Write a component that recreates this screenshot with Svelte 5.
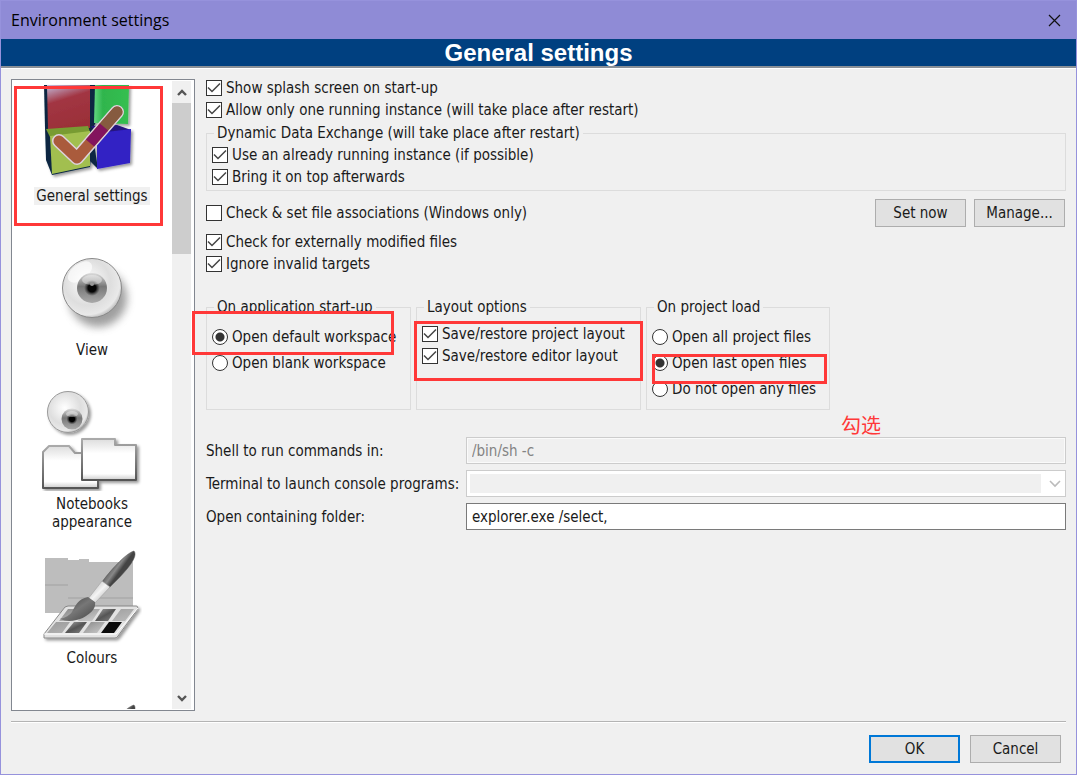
<script>
  let startup = $state('default');
  let load = $state('last');
  let selected = $state('General settings');
  const pages = ['General settings', 'View', 'Notebooks appearance', 'Colours', 'Editor'];
</script>

{#snippet check(label, checked)}
  <label class="option"><input type="checkbox" {checked} /><span>{label}</span></label>
{/snippet}

{#snippet brush()}
  <path d="M92 6C84 8 67 27 60 37l7 6C77 33 98 13 92 6Z" fill="url(#handle)" stroke="#555" stroke-width=".5" />
  <path d="M60 36 46 54l7 4 15-16Z" fill="url(#ferrule)" stroke="#999" stroke-width=".5" />
  <path d="M46 52c-10 2-13 9-16 15-4 5-9 6-12 7 9 4 20 1 26-3 6-4 10-8 9-14Z" fill="url(#bristle)" />
{/snippet}

<div class="window">
  <header class="titlebar">
    <span>Environment settings</span>
    <button class="close" aria-label="Close">
      <svg width="13" height="13" viewBox="0 0 13 13"><path d="M1 1l11 11M12 1 1 12" stroke="#111" stroke-width="1.2" /></svg>
    </button>
  </header>
  <h1>General settings</h1>

  <main>
    <nav class="sidebar">
      <div class="pages">
        {#each pages as page, i}
          <button class="page" class:selected={selected === page} aria-label={page} onclick={() => (selected = page)}>
            <svg width="100" height="100" viewBox="0 0 100 100" fill="none">
              {#if i === 0}
                <defs>
                  <linearGradient id="red" x1="0" y1="0" x2=".3" y2="1"><stop stop-color="#c3bfe0" /><stop offset=".4" stop-color="#a23643" /><stop offset="1" stop-color="#9b2f38" /></linearGradient>
                  <linearGradient id="green" x1="0" x2="1"><stop stop-color="#62d680" /><stop offset=".25" stop-color="#2fb54d" /><stop offset="1" stop-color="#35bf50" /></linearGradient>
                  <filter id="soft" x="-20%" y="-20%" width="150%" height="150%"><feDropShadow dx="2" dy="2" stdDeviation="1.5" flood-opacity=".4" /></filter>
                </defs>
                <g filter="url(#soft)">
                  <path d="M2 2h50v40l-4 42-38 8-6-15-1-32Z" fill="#0a2742" />
                  <path d="M46 2h8v37l-4 8 6 39-8-8Z" fill="#0a2742" />
                  <path d="M5 2h43v43L6 47Z" fill="url(#red)" />
                  <path d="M53 2h34l-1 39-34-1Z" fill="url(#green)" />
                  <path d="m4 46 42-3 2 6-40 5Z" fill="#789b30" />
                  <path d="m8 53 40-5v35l-38 8Z" fill="#a2bf50" />
                  <path d="m49 43 26-1 14 5-34 4Z" fill="#26147d" />
                  <path d="m55 50 34-4-1 34-33 6Z" fill="#3020c4" />
                </g>
                <path d="m17 58 18 17 40-46" stroke="#ddd3dc" stroke-width="14" stroke-linecap="round" stroke-linejoin="round" />
                <path d="m17 58 18 17 40-46" stroke="#aa5b3c" stroke-width="11" stroke-linecap="round" stroke-linejoin="round" />
                <path d="m61 45 14-16" stroke="#865b40" stroke-width="11" stroke-linecap="round" />
                <path d="m48 60 14-16" stroke="#83145e" stroke-width="11" />
              {:else if i === 1}
                <defs>
                  <radialGradient id="ball" cx=".42" cy=".4" r=".65"><stop stop-color="#fff" /><stop offset=".6" stop-color="#dedede" /><stop offset=".85" stop-color="#e9e9e9" /><stop offset="1" stop-color="#aaa" /></radialGradient>
                  <linearGradient id="iris" x1="0" y1="0" x2="0" y2="1"><stop stop-color="#ddd" /><stop offset=".45" stop-color="#777" /><stop offset="1" stop-color="#aaa" /></linearGradient>
                  <radialGradient id="pupil"><stop offset=".5" stop-color="#050505" /><stop offset="1" stop-color="#333" stop-opacity="0" /></radialGradient>
                  <filter id="blur" x="-30%" y="-30%" width="160%" height="160%"><feGaussianBlur stdDeviation="4" /></filter>
                </defs>
                <circle cx="56" cy="61" r="29" fill="#777" opacity=".7" filter="url(#blur)" />
                <circle cx="50" cy="51" r="29.5" fill="url(#ball)" stroke="#8a8a8a" />
                <ellipse cx="38" cy="35" rx="14" ry="8" fill="#fff" opacity=".65" transform="rotate(-38 38 35)" />
                <circle cx="50" cy="51" r="15" fill="url(#iris)" />
                <circle cx="50" cy="51" r="8" fill="url(#pupil)" />
                <ellipse cx="50" cy="43" rx="10" ry="5" fill="#fff" opacity=".4" />
                <circle cx="50" cy="47" r="2" fill="#999" />
              {:else if i === 2}
                <defs>
                  <linearGradient id="paper" x1="0" y1="0" x2="0" y2="1"><stop stop-color="#ddd" /><stop offset=".35" stop-color="#fff" /><stop offset=".85" stop-color="#fff" /><stop offset="1" stop-color="#ccc" /></linearGradient>
                  <linearGradient id="edge" x1="0" y1="0" x2="0" y2="1"><stop stop-color="#aaa" /><stop offset="1" stop-color="#555" /></linearGradient>
                </defs>
                <g filter="url(#soft)">
                  <circle cx="26" cy="21" r="20.5" fill="url(#ball)" stroke="#999" />
                  <circle cx="30" cy="28" r="10.5" fill="url(#iris)" />
                  <circle cx="30" cy="28" r="5.5" fill="url(#pupil)" />
                  <ellipse cx="30" cy="23" rx="6" ry="3" fill="#fff" opacity=".4" />
                </g>
                <g filter="url(#soft)" stroke="url(#edge)" stroke-width="2" stroke-linejoin="round">
                  <path d="M1 61l6-6h20l6 7h23v35H1Z" fill="url(#paper)" />
                  <path d="M40 48h33v6h21v35H40Z" fill="url(#paper)" />
                </g>
              {:else if i === 3}
                <defs>
                  <linearGradient id="handle" x1="0" y1="0" x2="1" y2=".8"><stop offset=".3" stop-color="#4a4a4a" /><stop offset=".5" stop-color="#888" /><stop offset=".6" stop-color="#444" /></linearGradient>
                  <linearGradient id="ferrule" x1="0" y1="0" x2="1" y2="1"><stop stop-color="#aaa" /><stop offset=".5" stop-color="#f4f4f4" /><stop offset="1" stop-color="#999" /></linearGradient>
                  <linearGradient id="bristle" x1="0" y1="0" x2="1" y2="1"><stop stop-color="#333" /><stop offset=".5" stop-color="#777" /><stop offset="1" stop-color="#444" /></linearGradient>
                  <linearGradient id="cell" x1="0" y1="0" x2="1" y2="1"><stop stop-color="#888" /><stop offset="1" stop-color="#ccc" /></linearGradient>
                  <linearGradient id="dark" x1="0" y1="0" x2="1" y2="1"><stop stop-color="#aaa" /><stop offset=".5" stop-color="#555" /><stop offset="1" stop-color="#888" /></linearGradient>
                </defs>
                <path d="M3 13h23v2h11v-1h10v3h44v44H26v7H3Z" fill="#bdbdbd" />
                <path d="M3 40h23M26 53h65" stroke="#aaa" stroke-width="1.5" />
                <g filter="url(#soft)">
                  <path d="M26 61h68q3 0 1 4L76 91q-1 2-3 2H2v-4l21-27Z" fill="#e2e2e2" stroke="#888" />
                </g>
                <path d="M2 89h72l22-26" stroke="#fff" />
                <path d="M26 64h14L31 76H17ZM44 64h14l-8 12H36Z" fill="url(#cell)" />
                <path d="M61 64h13l-8 12H53Z" fill="url(#dark)" />
                <path d="M79 64h13l-9 12H70ZM14 77h14L20 88H5Z" fill="url(#cell)" />
                <path d="M32 77h13l-8 11H23Z" fill="url(#dark)" />
                <path d="M49 77h14l-8 11H41Z" fill="url(#cell)" />
                <path d="M67 77h13l-8 11H59Z" fill="#0b0b0b" />
                {@render brush()}
              {:else}
                {@render brush()}
              {/if}
            </svg>
            {#if i < 4}<span class="name" class:wrap={i === 2}>{page}</span>{/if}
          </button>
        {/each}
      </div>
      <div class="scrollbar">
        <button aria-label="Scroll up"><svg width="10" height="7" viewBox="0 0 10 7" fill="none"><path d="m1 6 4-4 4 4" stroke="#555" stroke-width="2.4" /></svg></button>
        <div class="thumb"></div>
        <button aria-label="Scroll down"><svg width="10" height="7" viewBox="0 0 10 7" fill="none"><path d="m1 1 4 4 4-4" stroke="#555" stroke-width="2.4" /></svg></button>
      </div>
      <div class="mark mark-page"></div>
    </nav>

    <form class="settings" onsubmit={(e) => e.preventDefault()}>
      {@render check('Show splash screen on start-up', true)}
      {@render check('Allow only one running instance (will take place after restart)', true)}
      <fieldset class="dde">
        <legend>Dynamic Data Exchange (will take place after restart)</legend>
        {@render check('Use an already running instance (if possible)', true)}
        {@render check('Bring it on top afterwards', true)}
      </fieldset>
      <div class="assoc">
        {@render check('Check & set file associations (Windows only)', false)}
        <button class="btn" type="button">Set now</button>
        <button class="btn" type="button">Manage...</button>
      </div>
      {@render check('Check for externally modified files', true)}
      {@render check('Ignore invalid targets', true)}

      <div class="groups">
        <fieldset>
          <legend>On application start-up</legend>
          <div class="radios">
            <label class="option"><input type="radio" name="startup" value="default" bind:group={startup} /><span>Open default workspace</span></label>
            <label class="option"><input type="radio" name="startup" value="blank" bind:group={startup} /><span>Open blank workspace</span></label>
          </div>
          <div class="mark mark-startup"></div>
        </fieldset>
        <fieldset>
          <legend>Layout options</legend>
          <div class="checks">
            {@render check('Save/restore project layout', true)}
            {@render check('Save/restore editor layout', true)}
          </div>
          <div class="mark mark-layout"></div>
        </fieldset>
        <fieldset>
          <legend>On project load</legend>
          <div class="radios">
            <label class="option"><input type="radio" name="load" value="all" bind:group={load} /><span>Open all project files</span></label>
            <label class="option"><input type="radio" name="load" value="last" bind:group={load} /><span>Open last open files</span></label>
            <label class="option"><input type="radio" name="load" value="none" bind:group={load} /><span>Do not open any files</span></label>
          </div>
          <div class="mark mark-load"></div>
          <span class="note" lang="zh">勾选</span>
        </fieldset>
      </div>

      <div class="fields">
        <label for="shell">Shell to run commands in:</label>
        <input id="shell" type="text" value="/bin/sh -c" disabled />
        <label for="terminal">Terminal to launch console programs:</label>
        <div class="combo">
          <select id="terminal" disabled><option></option></select>
          <svg width="12" height="8" viewBox="0 0 12 8" fill="none"><path d="m1 1 5 5 5-5" stroke="#bbb" stroke-width="1.6" /></svg>
        </div>
        <label for="folder">Open containing folder:</label>
        <input id="folder" type="text" value="explorer.exe /select," />
      </div>
    </form>
  </main>

  <footer>
    <button class="btn primary">OK</button>
    <button class="btn">Cancel</button>
  </footer>
</div>

<style>
  :global(body) { margin: 0; }
  .window, .window :global(*) { box-sizing: border-box; }
  .window {
    display: flex;
    flex-direction: column;
    height: 100vh;
    border: 1px solid #9692dc;
    background: #f0f0f0;
    color: #1a1a1a;
    font: 15px/18px "DejaVu Sans Condensed", "Noto Sans", sans-serif;
  }
  button, input, select { font: inherit; color: inherit; margin: 0; }
  button { padding: 0; border: 0; background: none; }
  .titlebar {
    display: flex;
    align-items: center;
    justify-content: space-between;
    height: 38px;
    flex: none;
    padding: 0 15px 0 10px;
    background: #8f8bd6;
    color: #000;
    font: 16px/20px "Open Sans", sans-serif;
  }
  .close { display: flex; }
  h1 {
    flex: none;
    margin: 0;
    height: 29px;
    border-bottom: 2px solid #8a9097;
    background: #004080;
    color: #fff;
    text-align: center;
    font: bold 24px/28px "Liberation Sans", sans-serif;
  }
  main { display: flex; flex: 1; min-height: 0; padding: 8px 10px 10px; border-top: 1px solid #fff; }
  .sidebar {
    position: relative;
    display: flex;
    width: 184px;
    flex: none;
    margin-top: 2px;
    border: 1px solid #828790;
    padding: 1px 3px 1px 0;
    background: #fff;
  }
  .pages { flex: 1; min-width: 0; overflow: hidden; padding-top: 2px; }
  .page { display: flex; flex-direction: column; align-items: center; width: 100%; height: 154px; gap: 4px; }
  .page svg { flex: none; }
  .name { padding: 0 2px; white-space: nowrap; }
  .wrap { max-width: 116px; white-space: normal; }
  .selected .name { background: #f0f0f0; }
  .scrollbar { display: flex; flex-direction: column; width: 19px; background: #f0f0f0; }
  .scrollbar button { display: flex; align-items: center; justify-content: center; height: 22px; }
  .thumb { height: 151px; margin-bottom: auto; background: #cdcdcd; }
  .settings { flex: 1; min-width: 0; margin-left: 11px; }
  .option { display: flex; align-items: center; gap: 4px; height: 22px; white-space: nowrap; }
  .option input { appearance: none; flex: none; width: 16px; height: 16px; border: 1px solid #333; background: #fff; }
  input[type="checkbox"]:checked {
    background: #fff url("data:image/svg+xml,%3Csvg xmlns='http://www.w3.org/2000/svg' viewBox='0 0 14 14'%3E%3Cpath d='M1 6.500l4 4 8-8' fill='none' stroke='%23444' stroke-width='1.500'/%3E%3C/svg%3E");
  }
  .option input[type="radio"] { border-radius: 50%; }
  .option input[type="radio"]:checked { background: radial-gradient(circle, #333 4px, #fff 5px); }
  fieldset { position: relative; min-width: 0; margin: 0; padding: 2px 5px; border: 1px solid #dcdcdc; }
  legend { height: 18px; margin-left: 2px; padding: 0 3px; white-space: nowrap; }
  .dde { margin-top: 3px; }
  .assoc { display: flex; align-items: center; gap: 8px; margin: 8px 1px 4px 0; }
  .assoc .option { margin-right: auto; }
  .btn { width: 91px; height: 28px; border: 1px solid #adadad; background: #e1e1e1; }
  .primary { border: 2px solid #0078d7; }
  .groups { display: grid; grid-template-columns: 205px 225px 184px; gap: 5px; margin-top: 23px; }
  .groups fieldset { height: 112px; padding: 0 5px; }
  .radios { position: relative; padding-top: 8px; }
  .radios .option { height: 26px; }
  .checks { padding-top: 7px; }
  .groups fieldset:first-child .radios { margin-top: -3px; padding-top: 11px; background: #f0f0f0; }
  .mark { position: absolute; border: 3px solid #ff3838; pointer-events: none; }
  .mark-page { left: 2px; top: 6px; width: 149px; height: 140px; }
  .mark-startup { left: -15px; top: -5px; width: 202px; height: 44px; }
  .mark-layout { left: -3px; top: 5px; width: 229px; height: 60px; }
  .mark-load { left: 5px; top: 38px; width: 175px; height: 30px; }
  .note { position: absolute; left: 194px; top: 97px; color: #ff3838; font: 20px/24px "Noto Sans CJK SC", sans-serif; white-space: nowrap; }
  .fields { display: grid; grid-template-columns: 260px 1fr; align-items: center; row-gap: 6px; margin-top: 27px; }
  .fields label { white-space: nowrap; }
  .fields input, .combo { width: 100%; height: 27px; border: 1px solid #7a7a7a; background: #fff; }
  .fields input { padding: 0 5px; }
  .fields input:disabled { border-color: #ccc; background: #f0f0f0; color: #838383; box-shadow: inset 0 0 0 1px #fafafa; }
  .combo { display: flex; align-items: center; border-color: #ccc; padding: 3px 4px 3px 3px; }
  .combo select { appearance: none; flex: 1; height: 100%; margin-right: 8px; border: 0; border-radius: 0; background: #f0f0f0; opacity: 1; }
  footer {
    display: flex;
    flex: none;
    justify-content: flex-end;
    gap: 10px;
    margin: 0 10px;
    padding: 13px 5px 11px;
    border-top: 1px solid #b4b4b4;
    box-shadow: inset 0 1px #fff;
  }
</style>
